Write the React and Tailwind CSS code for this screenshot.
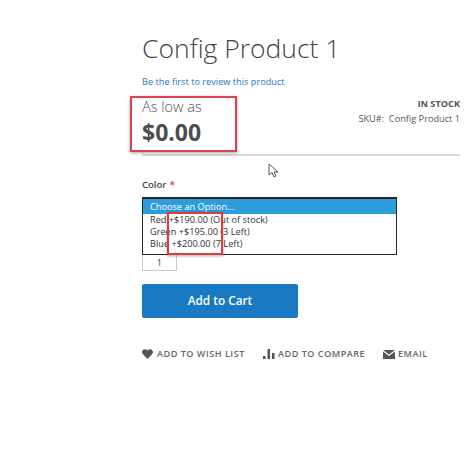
import React from "react";

function Heart() {
  return (
    <svg width="11" height="10" viewBox="0 0 24 22" className="fill-[#555]">
      <path d="M12 22 2.500 12.200C-.6 9-.6 5 1.600 2.600 4-.2 8.600-.7 12 3.200c3.400-3.900 8-3.400 10.400-.6 2.200 2.400 2.200 6.400-.9 9.600z" />
    </svg>
  );
}

function Bars() {
  return (
    <svg width="12" height="10" viewBox="0 0 12 10" className="fill-[#555]">
      <rect x="0" y="7" width="2.500" height="3" />
      <rect x="4.500" y="0" width="2.500" height="10" />
      <rect x="9" y="4" width="2.500" height="6" />
    </svg>
  );
}

function Mail() {
  return (
    <svg width="12" height="9" viewBox="0 0 12 9" className="fill-[#555]">
      <path d="M0 0h12L6 4.500z" />
      <path d="M0 1.500V9h12V1.500L6 6z" />
    </svg>
  );
}

function Action({ icon, label, className }) {
  return (
    <div className={"flex items-center " + className}>
      {icon}
      <span>{label}</span>
    </div>
  );
}

export default function App() {
  return (
    <div className="relative h-[469px] w-[474px] overflow-hidden bg-white pl-[142px] pr-[14px] text-[#444] font-['Open_Sans',sans-serif]">
      <h1 className="pt-[28px] text-[26.500px] leading-[40px] font-light text-[#444]">Config Product 1</h1>
      <a className="mt-[6px] block text-[9.200px] leading-[16px] text-[#1979c3]">Be the first to review this product</a>

      <div className="mt-[6px] flex h-[60px] justify-between border-b-2 border-[#d9d9d9]">
        <div>
          <div className="pt-[1px] text-[14.500px] leading-[20px] font-light text-[#555]">As low as</div>
          <div className="text-[23px] leading-[30px] font-bold text-[#4d4d4d]">$0.00</div>
        </div>
        <div className="text-right text-[9.200px] leading-[15px]">
          <div className="font-bold text-[#555]">IN STOCK</div>
          <div className="text-[#555]">SKU#:&nbsp; Config Product 1</div>
        </div>
      </div>

      <div className="mt-[22px] text-[9.500px] leading-[14px] font-semibold text-[#444]">
        Color <span className="ml-[1px] text-[#e02b27]">*</span>
      </div>

      <div className="mt-[5px] h-[58px] w-[255px] border-[1.500px] border-t-2 border-[#262626] bg-white text-[9.200px] leading-[12px] text-[#333]">
        <div className="flex h-[15px] items-center bg-[#2d9cdb] pt-[1px] pl-[7px] text-white">Choose an Option...</div>
        <div className="pl-[7px]">
          <div>Red +$190.00 (Out of stock)</div>
          <div>Green +$195.00 (3 Left)</div>
          <div>Blue +$200.00 (7 Left)</div>
        </div>
      </div>

      <div className="flex h-[16px] w-[35px] items-center justify-center border border-t-0 border-[#c9c9c9] text-[9.200px] text-[#444]">1</div>

      <button className="mt-[13px] block h-[34px] w-[156px] rounded-[2px] bg-[#1979c3] text-[11.800px] font-semibold text-white">
        Add to Cart
      </button>

      <div className="mt-[29px] flex items-center text-[9.100px] leading-[14px] font-semibold tracking-[0.5px] text-[#666]">
        <Action icon={<Heart />} label="ADD TO WISH LIST" className="w-[121px] gap-[4px]" />
        <Action icon={<Bars />} label="ADD TO COMPARE" className="w-[120px] gap-[3px]" />
        <Action icon={<Mail />} label="EMAIL" className="gap-[3px]" />
      </div>

      <div className="absolute top-[96px] left-[130px] h-[56px] w-[107px] border-2 border-[#d9444f] shadow-[0_1px_3px_rgba(0,0,0,0.35)]" />
      <div className="absolute top-[212px] left-[167px] h-[43px] w-[56px] border-2 border-[#e0393e] shadow-[0_1px_3px_rgba(0,0,0,0.3)]" />

      <svg width="11" height="15" viewBox="0 0 11 15" className="absolute top-[163px] left-[268px]">
        <path d="M1 1v11l3-2.500 2 4.500 2-1-2-4h4z" fill="#fff" stroke="#555" strokeWidth="1" />
      </svg>
    </div>
  );
}
